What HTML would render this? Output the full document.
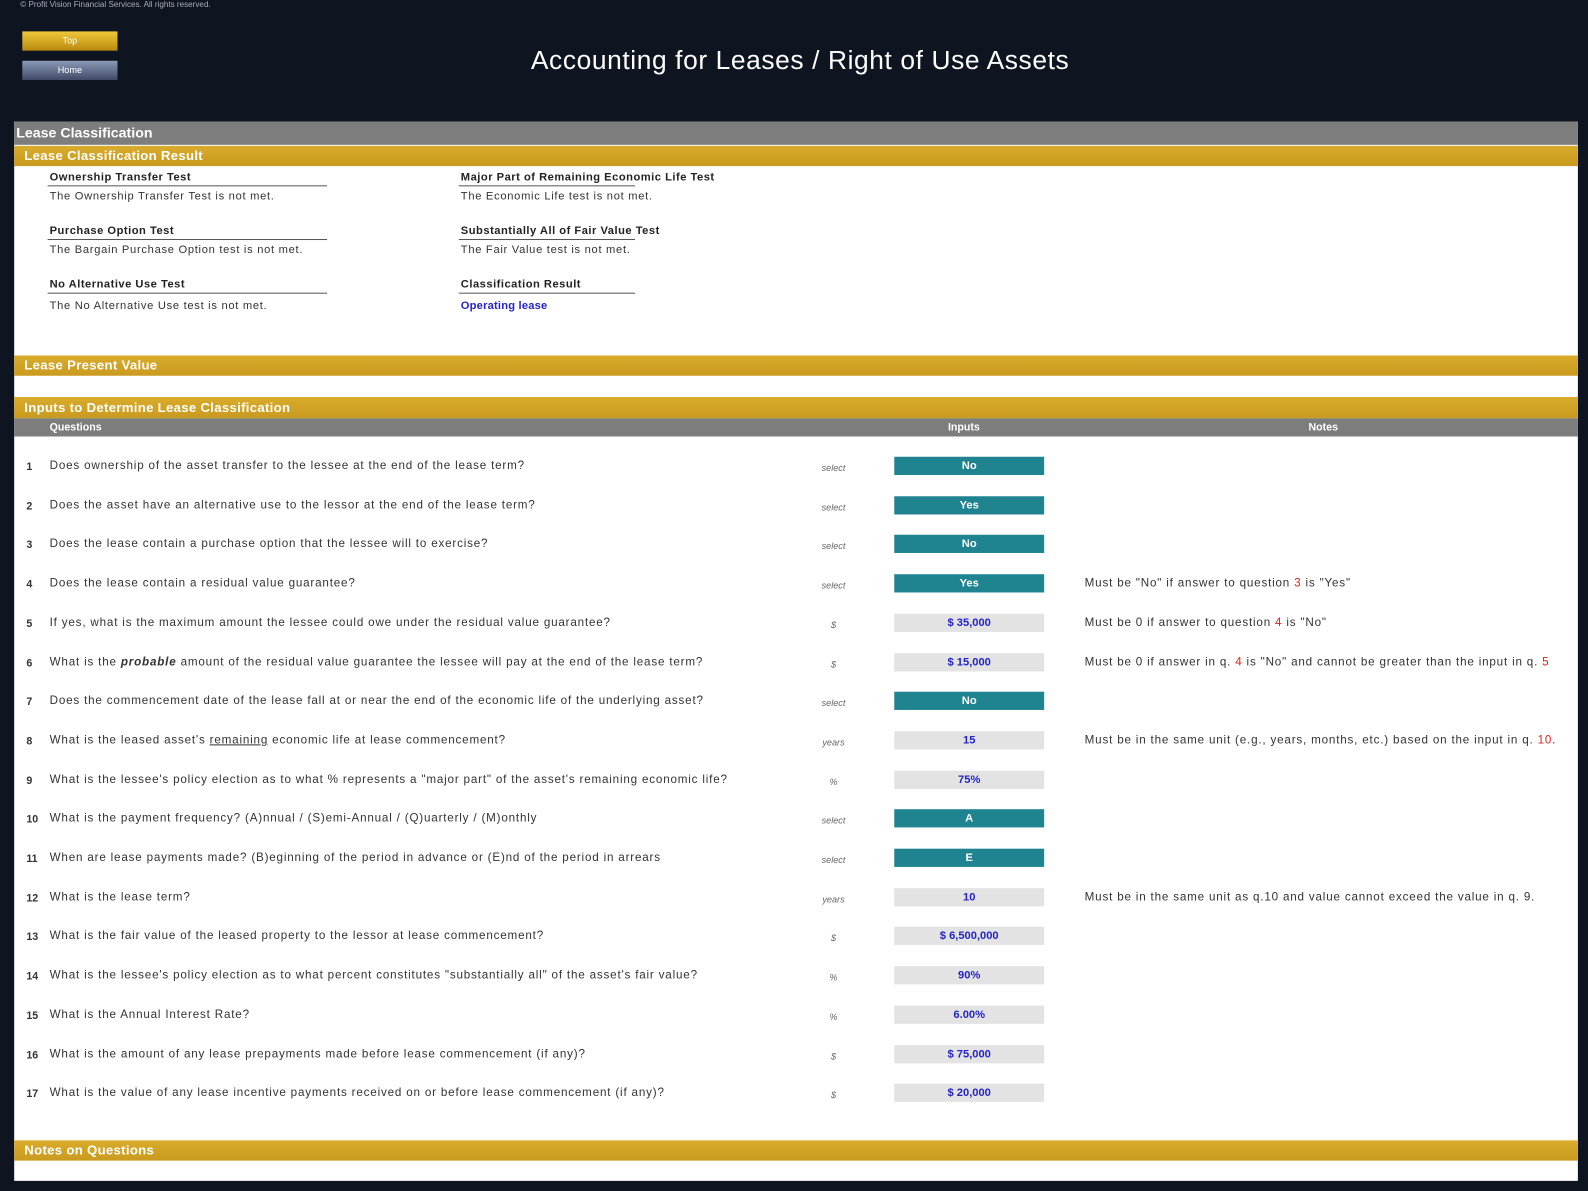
<!DOCTYPE html>
<html><head><meta charset="utf-8"><style>
*{margin:0;padding:0;box-sizing:border-box}
html,body{width:1588px;height:1191px;overflow:hidden;background:#0f1520}
#w{position:absolute;left:0;top:0;width:1568px;height:1176px;transform:scale(1.01276);transform-origin:0 0;background:#0f1520;font-family:"Liberation Sans",sans-serif}
.a{position:absolute;white-space:nowrap}
.copy{left:20px;top:0;font-size:8px;color:#aab}
.btn{position:absolute;left:22px;width:94px;height:19px;font-size:9px;color:#fff;text-align:center;line-height:19px}
.title{left:0;width:1580px;text-align:center;top:44px;font-size:26px;color:#fff;letter-spacing:0.6px}
.main{position:absolute;left:14px;top:120px;width:1544px;height:1046px;background:#fff}
.gray{position:absolute;left:0;width:100%;background:#7d7d7d;color:#fff;font-weight:bold}
.gold{position:absolute;left:0;width:100%;background:linear-gradient(#d9ac2c,#c99a1e);color:#fff;font-weight:bold;font-size:13px;padding-left:10px;letter-spacing:0.3px}
.h{font-size:11px;font-weight:bold;color:#222;letter-spacing:0.5px}
.t{font-size:11px;color:#333;letter-spacing:0.7px}
.ul{position:absolute;height:1px;background:#555}
.q{font-size:11.5px;color:#333;letter-spacing:0.8px}
.n{font-size:10.5px;color:#333;font-weight:bold}
.u{font-size:9px;color:#666;font-style:italic}
.box{position:absolute;left:869px;width:148px;height:18px;text-align:center;font-size:11px;line-height:18px;font-weight:bold}
.tl{background:#1f8390;color:#fff}
.gy{background:#e3e3e3;color:#2323c8}
.note{font-size:11.5px;color:#333;letter-spacing:0.8px}
.r{color:#e02020}
</style></head><body><div id="w">
<div class="a copy">© Profit Vision Financial Services. All rights reserved.</div>
<div class="btn" style="top:31px;background:linear-gradient(#f0c838,#b88a10)">Top</div>
<div class="btn" style="top:60px;background:linear-gradient(#8a9ab8,#404a66)">Home</div>
<div class="a title">Accounting for Leases / Right of Use Assets</div>
<div class="main">
<div class="gray" style="top:0;height:23px;font-size:14px;padding-left:2px;line-height:23px">Lease Classification</div>
<div class="gold" style="top:24px;height:20px;line-height:20px">Lease Classification Result</div>
<div class="a h" style="left:35px;top:49px">Ownership Transfer Test</div><div class="ul" style="left:33px;top:63px;width:276px"></div>
<div class="a t" style="left:35px;top:68px">The Ownership Transfer Test is not met.</div>
<div class="a h" style="left:35px;top:102px">Purchase Option Test</div><div class="ul" style="left:33px;top:116px;width:276px"></div>
<div class="a t" style="left:35px;top:121px">The Bargain Purchase Option test is not met.</div>
<div class="a h" style="left:35px;top:155px">No Alternative Use Test</div><div class="ul" style="left:33px;top:169px;width:276px"></div>
<div class="a t" style="left:35px;top:176px">The No Alternative Use test is not met.</div>
<div class="a h" style="left:441px;top:49px">Major Part of Remaining Economic Life Test</div><div class="ul" style="left:439px;top:63px;width:174px"></div>
<div class="a t" style="left:441px;top:68px">The Economic Life test is not met.</div>
<div class="a h" style="left:441px;top:102px">Substantially All of Fair Value Test</div><div class="ul" style="left:439px;top:116px;width:174px"></div>
<div class="a t" style="left:441px;top:121px">The Fair Value test is not met.</div>
<div class="a h" style="left:441px;top:155px">Classification Result</div><div class="ul" style="left:439px;top:169px;width:174px"></div>
<div class="a t" style="left:441px;top:176px;color:#2323c8;font-weight:bold;letter-spacing:0.2px">Operating lease</div>
<div class="gold" style="top:231px;height:20px;line-height:20px">Lease Present Value</div>
<div class="gold" style="top:272px;height:21px;line-height:21px">Inputs to Determine Lease Classification</div>
<div class="gray" style="top:293px;height:18px;font-size:10.5px;line-height:18px">
<span class="a" style="left:35px">Questions</span><span class="a" style="left:922px">Inputs</span><span class="a" style="left:1278px">Notes</span></div>
</div>
<div id="rows"></div>
</div>
<script>
var d=[["Does ownership of the asset transfer to the lessee at the end of the lease term?","select","No",1,""],
["Does the asset have an alternative use to the lessor at the end of the lease term?","select","Yes",1,""],
["Does the lease contain a purchase option that the lessee will to exercise?","select","No",1,""],
["Does the lease contain a residual value guarantee?","select","Yes",1,'Must be "No" if answer to question <span class=r>3</span> is "Yes"'],
["If yes, what is the maximum amount the lessee could owe under the residual value guarantee?","$","$ 35,000",0,'Must be 0 if answer to question <span class=r>4</span> is "No"'],
["What is the <b><i>probable</i></b> amount of the residual value guarantee the lessee will pay at the end of the lease term?","$","$ 15,000",0,'Must be 0 if answer in q. <span class=r>4</span> is "No" and cannot be greater than the input in q. <span class=r>5</span>'],
["Does the commencement date of the lease fall at or near the end of the economic life of the underlying asset?","select","No",1,""],
["What is the leased asset's <u>remaining</u> economic life at lease commencement?","years","15",0,'Must be in the same unit (e.g., years, months, etc.) based on the input in q. <span class=r>10</span>.'],
["What is the lessee's policy election as to what % represents a \"major part\" of the asset's remaining economic life?","%","75%",0,""],
["What is the payment frequency? (A)nnual / (S)emi-Annual / (Q)uarterly / (M)onthly","select","A",1,""],
["When are lease payments made? (B)eginning of the period in advance or (E)nd of the period in arrears","select","E",1,""],
["What is the lease term?","years","10",0,"Must be in the same unit as q.10 and value cannot exceed the value in q. 9."],
["What is the fair value of the leased property to the lessor at lease commencement?","$","$ 6,500,000",0,""],
["What is the lessee's policy election as to what percent constitutes \"substantially all\" of the asset's fair value?","%","90%",0,""],
["What is the Annual Interest Rate?","%","6.00%",0,""],
["What is the amount of any lease prepayments made before lease commencement (if any)?","$","$ 75,000",0,""],
["What is the value of any lease incentive payments received on or before lease commencement (if any)?","$","$ 20,000",0,""]];
var h="";d.forEach(function(r,i){var y=453+i*38.7;
h+='<div class="a n" style="left:26px;top:'+(y+2)+'px">'+(i+1)+'</div><div class="a q" style="left:49px;top:'+(y+1)+'px">'+r[0]+'</div>';
h+='<div class="a u" style="left:805px;width:36px;text-align:center;top:'+(y+4)+'px">'+r[1]+'</div>';
h+='<div class="box '+(r[3]?'tl':'gy')+'" style="left:883px;top:'+(y-2)+'px">'+r[2]+'</div>';
if(r[4])h+='<div class="a note" style="left:1071px;top:'+(y+1)+'px">'+r[4]+'</div>';});
document.getElementById('rows').innerHTML=h;
</script>
<div style="position:absolute;left:0;top:0;width:1568px;height:1176px;pointer-events:none;transform:scale(1.01276);transform-origin:0 0">
<div style="position:absolute;left:14px;top:1126px;width:1544px;height:20px;background:linear-gradient(#d9ac2c,#c99a1e);color:#fff;font:bold 13px 'Liberation Sans',sans-serif;padding-left:10px;line-height:20px;letter-spacing:0.3px">Notes on Questions</div>
</div>
</body></html>
